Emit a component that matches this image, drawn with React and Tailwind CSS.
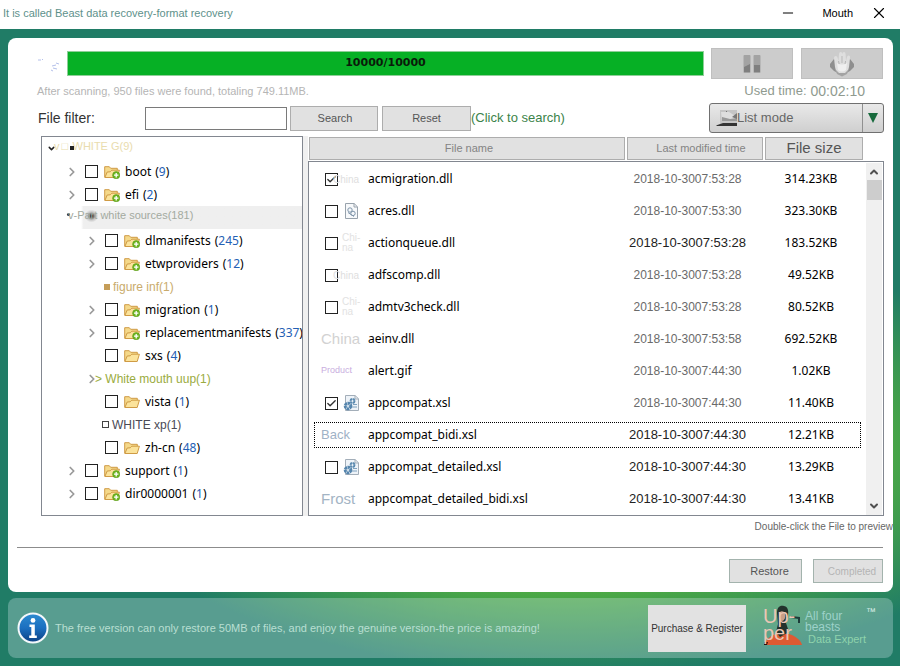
import { Check, ChevronDown, ChevronRight, ChevronUp, Minus, X } from "lucide-react";

const tree = [
  { kind: "root" },
  { kind: "folder", name: "boot", count: 9, plus: true },
  { kind: "folder", name: "efi", count: 2, plus: true },
  { kind: "open" },
  { kind: "folder", name: "dlmanifests", count: 245, plus: true, deep: true },
  { kind: "folder", name: "etwproviders", count: 12, plus: true, deep: true },
  { kind: "figure" },
  { kind: "folder", name: "migration", count: 1, plus: true, deep: true },
  { kind: "folder", name: "replacementmanifests", count: 337, plus: true, deep: true },
  { kind: "folder", name: "sxs", count: 4, deep: true },
  { kind: "mouth" },
  { kind: "folder", name: "vista", count: 1, deep: true },
  { kind: "xp" },
  { kind: "folder", name: "zh-cn", count: 48, deep: true },
  { kind: "folder", name: "support", count: 1, plus: true },
  { kind: "folder", name: "dir0000001", count: 1, plus: true },
];

const files = [
  { name: "acmigration.dll", time: "2018-10-3007:53:28", size: "314.23KB", mark: "faint", checked: true },
  { name: "acres.dll", time: "2018-10-3007:53:30", size: "323.30KB", mark: "page" },
  { name: "actionqueue.dll", time: "2018-10-3007:53:28", size: "183.52KB", mark: "split", dark: true },
  { name: "adfscomp.dll", time: "2018-10-3007:53:28", size: "49.52KB", mark: "faint" },
  { name: "admtv3check.dll", time: "2018-10-3007:53:28", size: "80.52KB", mark: "split" },
  { name: "aeinv.dll", time: "2018-10-3007:53:58", size: "692.52KB", word: "China", tone: "text-[15px] text-[#d2d2d2]" },
  { name: "alert.gif", time: "2018-10-3007:44:30", size: "1.02KB", word: "Product", tone: "text-[9px] text-[#c9aee0]" },
  { name: "appcompat.xsl", time: "2018-10-3007:44:30", size: "11.40KB", mark: "sheet", checked: true },
  { name: "appcompat_bidi.xsl", time: "2018-10-3007:44:30", size: "12.21KB", word: "Back", tone: "text-[13px] text-[#9fb2c6]", dark: true, focused: true },
  { name: "appcompat_detailed.xsl", time: "2018-10-3007:44:30", size: "13.29KB", mark: "sheet", dark: true },
  { name: "appcompat_detailed_bidi.xsl", time: "2018-10-3007:44:30", size: "13.41KB", word: "Frost", tone: "text-[15px] text-[#a3b4c4]", dark: true },
];

function Tick({ checked, label }) {
  return (
    <span className="relative flex size-[13px] shrink-0">
      <input
        type="checkbox"
        defaultChecked={checked}
        aria-label={label}
        className="peer size-[13px] appearance-none border border-[#222] bg-white"
      />
      <Check className="pointer-events-none absolute left-px top-px hidden size-[11px] text-[#333] peer-checked:block" strokeWidth={3} />
    </span>
  );
}

function Folder({ plus }) {
  return (
    <svg viewBox="0 0 16 14" className="h-[14px] w-4 shrink-0" aria-hidden="true">
      <path d="M.7 12.3V1.7h4.6l1.4 1.6h6.6v2.2" fill="#f5d98a" stroke="#cf9b45" />
      <path d="M.9 12.5 3.2 7l3-.2 1.6-1.6h7.6l-2.2 7.3z" fill="#fbe39b" stroke="#cf9b45" />
      {plus && (
        <>
          <circle cx="12.2" cy="10.2" r="3.6" fill="#6fb622" stroke="#5a9818" strokeWidth=".6" />
          <path d="M12.2 8v4.4M10 10.2h4.4" stroke="#fff" strokeWidth="1.3" />
        </>
      )}
    </svg>
  );
}

function PageIcon() {
  return (
    <svg viewBox="0 0 13 16" className="ml-[7px] h-4 w-[13px] shrink-0" fill="none" stroke="#98a2ac" aria-hidden="true">
      <path d="M.5.5h8.6l3.4 3.3v11.7H.5z" fill="#f7f9fb" />
      <path d="M9 .5V4h3.5" />
      <circle cx="5" cy="7" r="2.2" stroke="#7f95aa" />
      <circle cx="8" cy="10.4" r="2.2" stroke="#7f95aa" />
      <path d="m3 9.5 6 4" stroke="#7f95aa" />
    </svg>
  );
}

function SheetIcon() {
  return (
    <svg viewBox="0 0 16 16" className="ml-[5px] size-4 shrink-0" fill="none" aria-hidden="true">
      <path d="M2.5.5h9.5l3.5 3.2v11.8H2.5z" fill="#eef3f8" stroke="#a3aeb9" />
      <path d="M12 .5V4h3.5" stroke="#a3aeb9" />
      <circle cx="9.5" cy="6" r="2" stroke="#5b8ab0" strokeWidth="2" strokeDasharray="2.4 .5" />
      <circle cx="5" cy="11" r="2.8" stroke="#5585ad" strokeWidth="3" strokeDasharray="2.6 .5" />
      <path d="M9 12h5M10 9.5h4" stroke="#7fa2bf" />
      <circle cx="5" cy="11" r="1" fill="#c3d6e5" />
    </svg>
  );
}

function TreeRow({ item }) {
  if (item.kind === "root") {
    return (
      <li className="flex h-[23px] items-start pl-[5px] pt-px text-[11px] leading-4 text-[#e9dcae]">
        <ChevronDown className="mt-[6px] size-[9px] text-[#222]" strokeWidth={4} />
        <span className="-ml-[2px]">v</span>
        <span className="relative ml-[2px] w-[11px]">
          □<span className="absolute left-2 top-[8px] size-1 bg-[#222]" />
        </span>
        <span>WHITE G(9)</span>
      </li>
    );
  }
  if (item.kind === "open") {
    return (
      <li className="relative flex h-[23px] items-start bg-linear-to-r from-transparent from-15% to-[#efefef] to-16% pl-[26px] text-[11px] leading-[18px] text-[#a3aaa0]">
        <span className="absolute left-[25px] top-[7px] size-[3px] rounded-full bg-[#333]" />
        <span className="absolute left-[43px] top-1 h-[12px] w-[13px] bg-[radial-gradient(#333_8%,#99999980_45%,transparent_75%)]" />
        <span className="relative">v-Part white sources(181)</span>
      </li>
    );
  }
  if (item.kind === "figure") {
    return (
      <li className="flex h-[23px] items-center gap-[3px] pl-[62px] text-xs text-[#c9ab6c]">
        <span className="size-[6px] bg-[#c59d58]" />
        figure inf(1)
      </li>
    );
  }
  if (item.kind === "mouth") {
    return (
      <li className="flex h-[23px] items-center pl-[43px] text-xs text-[#9aab40]">
        <ChevronRight className="size-[14px] text-[#999]" strokeWidth={3} />
        <span className="-ml-1">&gt; White mouth uup(1)</span>
      </li>
    );
  }
  if (item.kind === "xp") {
    return (
      <li className="flex h-[23px] items-center gap-[3px] pl-[60px] text-xs text-[#4a4a55]">
        <span className="size-[7px] border border-[#444]" />
        WHITE xp(1)
      </li>
    );
  }
  return (
    <li className={`flex h-[23px] items-center ${item.deep ? "pl-[43px]" : "pl-[23px]"}`}>
      <span className="flex w-5 shrink-0">
        {item.plus && <ChevronRight className="size-[14px] text-[#999]" strokeWidth={3} />}
      </span>
      <label className="flex items-center whitespace-nowrap font-['Noto_Sans','Noto_Sans_CJK_SC',sans-serif] text-xs text-black">
        <Tick checked={false} label={item.name} />
        <span className="ml-[6px] mr-[5px]">
          <Folder plus={item.plus} />
        </span>
        <span className="mr-1">{item.name}</span>
        <span>
          (<span className="text-[#2460b4]">{item.count}</span>)
        </span>
      </label>
    </li>
  );
}

function FileMark({ file }) {
  if (file.word) {
    return <span className={`pl-[11px] ${file.tone}`}>{file.word}</span>;
  }
  return (
    <span className="relative flex items-center pl-[15px]">
      <Tick checked={file.checked} label={file.name} />
      {file.mark === "page" && <PageIcon />}
      {file.mark === "sheet" && <SheetIcon />}
      {file.mark === "faint" && (
        <span className="pointer-events-none absolute left-[23px] text-[10px] text-[#dedede]">China</span>
      )}
      {file.mark === "split" && (
        <span className="ml-1 text-[10px] leading-[10px] text-[#e2e2e2]">
          Chi-
          <br />
          na
        </span>
      )}
    </span>
  );
}

function FileTable() {
  const cols = "grid-cols-[minmax(0,1fr)_136px_98px]";
  const head = "flex items-center justify-center border border-[#adadad] bg-[#e1e1e1] font-normal";
  return (
    <div className="relative min-w-0 flex-1 pt-px">
      <table className="block w-full">
        <thead className="block">
          <tr className={`grid ${cols} gap-[2px] pl-px pr-[21px]`}>
            <th className={`${head} h-[23px] pl-1 text-[11px] text-[#848484]`}>File name</th>
            <th className={`${head} h-[23px] pl-3 text-[11px] text-[#848484]`}>Last modified time</th>
            <th className={`${head} h-[23px] text-[15px] text-[#555]`}>File size</th>
          </tr>
        </thead>
        <tbody className="mt-px block border border-[#828790] bg-white pt-px">
          {files.map((file) => (
            <tr
              key={file.name}
              className={`mx-[5px] mr-[22px] grid h-8 grid-cols-[54px_minmax(0,1fr)_137px_98px] items-center ${
                file.focused ? "my-[3px] !h-[26px] outline-1 -outline-offset-1 outline-dotted outline-black" : ""
              }`}
            >
              <td className="-ml-[5px] flex items-center pl-px">
                <FileMark file={file} />
              </td>
              <td className="truncate font-['Noto_Sans','Noto_Sans_CJK_SC',sans-serif] text-xs text-black">{file.name}</td>
              <td className={`pr-[14px] text-center ${file.dark ? "text-[13px] text-[#222]" : "text-xs text-[#6a6a6a]"}`}>
                {file.time}
              </td>
              <td className="pr-[2px] text-center font-['Noto_Sans','Noto_Sans_CJK_SC',sans-serif] text-xs text-black">{file.size}</td>
            </tr>
          ))}
        </tbody>
      </table>
      <div className="absolute bottom-px right-[2px] top-[27px] flex w-4 flex-col items-center justify-between bg-[#f0f0f0] py-[3px]">
        <div className="flex w-full flex-col items-center gap-[2px]">
          <ChevronUp className="size-3 text-[#505050]" strokeWidth={4} />
          <span className="h-5 w-[15px] bg-[#cdcdcd]" />
        </div>
        <ChevronDown className="size-3 text-[#505050]" strokeWidth={4} />
      </div>
    </div>
  );
}

function StopGlyph() {
  return (
    <svg viewBox="0 0 26 26" className="size-[26px]" aria-hidden="true">
      <path d="M1 13 5 8l4 3v11l-4-2-4-4zM25 13l-4-5-4 3v11l4-2 4-4z" fill="#8f8f8f" />
      <path d="M5 7q0-2 1.700-2t2 2l.8 3L10 3q.2-2 1.700-2t1.600 2q.2-2 1.700-2t1.600 2l.4 7 1-4q.5-2 2-1.500T21 7l-1 9q-1 7-7 9-6-2-7-9z" fill="#dedede" />
      <path d="M8 12q5 3 10 0l-1 7q-4 3-8 0z" fill="#efefef" />
      <path d="m9.500 10 .7 3M13 5v7M16.600 10l-.6 3" stroke="#b9b9b9" fill="none" />
      <path d="m6 18 4 4h6l4-4-2 5-5 2.500L8 23z" fill="#a3a3a3" />
    </svg>
  );
}

function PauseGlyph() {
  return (
    <svg viewBox="0 0 18 20" className="h-5 w-[18px]" aria-hidden="true">
      <rect x=".5" y="1" width="7" height="18" rx="1" fill="#a3a3a3" />
      <rect x="10.5" y="1" width="7" height="18" rx="1" fill="#a3a3a3" />
      <path d="M1 18v-5l6-3v8zM11 18v-7h6v7z" fill="#7f7f7f" />
    </svg>
  );
}

function ModeSelect() {
  return (
    <div className="flex h-[30px] w-[175px] items-center rounded-[3px] border border-[#707070] bg-linear-to-b from-[#e9e9e9] to-[#cfcfcf]">
      <svg viewBox="0 0 22 18" className="ml-[6px] h-[18px] w-[22px] shrink-0" aria-hidden="true">
        <path d="M4 1h17v15H4z" fill="#c5c5c5" />
        <path d="M5 3h8l8 5v4H6z" fill="#dedede" />
        <path d="m6 8 8 2 7-1v3H6z" fill="#999" />
        <path d="M0 16.500 7 14h14v3H1z" fill="#333" />
        <path d="M10 2h1v1h-1zM16 8l5-4v6z" fill="#777" />
      </svg>
      <select aria-label="View mode" className="-ml-px min-w-0 flex-1 appearance-none bg-transparent text-[13px] text-[#666]">
        <option>List mode</option>
      </select>
      <span className="flex h-full w-[21px] items-center justify-center border-l border-[#909090]">
        <svg viewBox="0 0 10 10" className="size-[10px]" aria-hidden="true">
          <path d="M0 0h10L5 10z" fill="#176a3c" />
        </svg>
      </span>
    </div>
  );
}

function InfoIcon() {
  return (
    <svg viewBox="0 0 32 32" className="size-8 shrink-0" aria-hidden="true">
      <defs>
        <linearGradient id="info" x1="0" y1="0" x2="0" y2="1">
          <stop offset="0" stopColor="#2d8bd0" />
          <stop offset=".5" stopColor="#1b6fc0" />
          <stop offset="1" stopColor="#0c3f82" />
        </linearGradient>
      </defs>
      <circle cx="16" cy="16" r="14.5" fill="url(#info)" stroke="#f4f8fb" strokeWidth="2" />
      <circle cx="16" cy="8.4" r="2.4" fill="#fff" />
      <path d="M12.5 12.5h5.3v11h2V26h-7.6v-2.5h2.1V15h-1.8z" fill="#fff" />
    </svg>
  );
}

function Brand() {
  return (
    <div className="flex h-[50px] w-[118px] shrink-0 items-start">
      <div className="relative h-full w-[42px] shrink-0">
        <svg viewBox="0 0 42 44" className="absolute left-0 top-0 h-[44px] w-[42px]" aria-hidden="true">
          <path d="M2 42c0-5 5-9 11-11h13c6 2 12 6 13 11z" fill="#de5a32" />
          <path d="M14 10c0-6 3-8 7-7 5 1 5 7 3 13l-1 4 3 9-9 5-4-5 2-8z" fill="#23322c" />
          <path d="M16 11c0-3 5-4 6 0s-1 7-3 7-3-3-3-7z" fill="#c89e86" />
          <path d="m28 14 8 1v5" stroke="#1d3c3a" strokeWidth="2" fill="none" />
          <path d="M1 42v-3h4l-1 3z" fill="#311" />
        </svg>
        <span className="relative block pt-[5px] text-xl leading-[17px] text-[#eac6b5]">
          Up-
          <br />
          per
        </span>
      </div>
      <div className="pt-2 text-xs leading-[11px] text-[#9dd2c9]">
        All four
        <br />
        beasts
        <div className="pl-[3px] pt-px text-[11px] text-[#8fd3ac]">Data Expert</div>
      </div>
      <span className="pt-1 text-[10px] leading-[10px] text-[#d9efe8]">™</span>
    </div>
  );
}

export default function App() {
  return (
    <div className="flex min-h-screen flex-col overflow-hidden bg-[radial-gradient(ellipse_54%_33%_at_63%_68%,#5cba38_50%,#207c66_100%)] font-['Liberation_Sans',Arial,sans-serif]">
      <header className="flex h-[29px] items-center bg-white pb-[3px] pl-[3px] pr-[14px]">
        <h1 className="flex-1 text-[11px] text-[#5e918b]">It is called Beast data recovery-format recovery</h1>
        <button aria-label="Minimize" className="mr-[26px] flex">
          <Minus className="size-4 text-black" strokeWidth={1.5} />
        </button>
        <button className="mr-[19px] text-[11px] text-black">Mouth</button>
        <button aria-label="Close" className="flex size-[14px] items-center justify-center">
          <X className="size-[18px] shrink-0 text-black" strokeWidth={1.5} />
        </button>
      </header>

      <main className="ml-2 mr-[7px] mt-[9px] flex-1 overflow-hidden rounded-lg bg-white pb-[9px] pt-[10px]">
        <div className="flex items-center pl-[29px] pr-[10px]">
          <svg viewBox="0 0 24 18" className="mr-[6px] h-[18px] w-6 shrink-0" fill="none" stroke="#b4c0ea" aria-hidden="true">
            <path d="M1 5h3M5 4l1 1M14 15l2 1M15 11l4-1M16 13l4 1M19 8l3 1" />
          </svg>
          <div
            role="progressbar"
            aria-label="Scan progress"
            aria-valuenow={10000}
            aria-valuemax={10000}
            className="flex h-[25px] flex-1 items-center justify-center border border-[#8fcf98] bg-[#06b025] font-['DejaVu_Sans',sans-serif] text-[11px] font-bold text-[#0a1a0a]"
          >
            10000/10000
          </div>
          <button aria-label="Pause" className="ml-[7px] flex h-[31px] w-[82px] items-center justify-center border border-[#bfbfbf] bg-[#cccccc]">
            <PauseGlyph />
          </button>
          <button aria-label="Stop" className="ml-2 flex h-[31px] w-[82px] items-center justify-center border border-[#bfbfbf] bg-[#cccccc]">
            <StopGlyph />
          </button>
        </div>

        <div className="flex h-6 items-center justify-between pl-[29px] pr-[28px]">
          <p className="text-[11px] text-[#b5b5b5]">After scanning, 950 files were found, totaling 749.11MB.</p>
          <p className="flex items-center gap-1 text-[13px] text-[#8f9a8f]">
            Used time: <span className="text-sm">00:02:10</span>
          </p>
        </div>

        <div className="flex h-[30px] items-center pl-[30px] pr-[9px]">
          <label htmlFor="filter" className="w-[107px] text-sm text-[#333]">
            File filter:
          </label>
          <input id="filter" type="text" className="h-[23px] w-[142px] border border-[#7a7a7a] bg-white px-1 text-xs" />
          <button className="ml-[3px] h-[25px] w-[88px] border border-[#adadad] bg-[#e1e1e1] pl-[2px] text-[11px] text-[#555]">Search</button>
          <button className="ml-1 h-[25px] w-[89px] border border-[#adadad] bg-[#e1e1e1] text-[11px] text-[#555]">Reset</button>
          <span className="flex-1 text-[13px] text-[#3b8349]">(Click to search)</span>
          <ModeSelect />
        </div>

        <div className="mt-[3px] flex pl-[33px] pr-[9px]">
          <ul className="w-[262px] shrink-0 overflow-hidden border border-[#828790] bg-white">
            {tree.map((item, i) => (
              <TreeRow key={i} item={item} />
            ))}
          </ul>
          <div className="w-[5px] bg-[#f0f0f0]" />
          <FileTable />
        </div>

        <p className="whitespace-nowrap pt-[3px] text-right text-[10px] leading-4 text-[#666]">Double-click the File to preview</p>

        <div className="ml-[9px] mr-[10px] mt-3 flex justify-end gap-[11px] border-t border-[#8c8c8c] pt-[11px]">
          <button className="h-6 w-[73px] border border-[#a3b3ad] bg-[#e1e1e1] pl-2 text-[11px] text-[#555]">Restore</button>
          <button className="h-6 w-[70px] border border-[#a3b3ad] bg-[#e1e1e1] pl-2 text-[10px] text-[#b4b4b4]">Completed</button>
        </div>
      </main>

      <footer className="mb-2 ml-2 mr-[7px] mt-[6px] flex h-[60px] items-center rounded-lg bg-[#ebf5ff]/28 pl-[9px] pr-3">
        <InfoIcon />
        <p className="ml-[6px] flex-1 text-[11px] text-[#b9dfd2]">
          The free version can only restore 50MB of files, and enjoy the genuine version-the price is amazing!
        </p>
        <button className="mr-[17px] h-[47px] w-[98px] whitespace-nowrap bg-[#e2e2e2] text-[10px] text-[#333]">Purchase &amp; Register</button>
        <Brand />
      </footer>
    </div>
  );
}
